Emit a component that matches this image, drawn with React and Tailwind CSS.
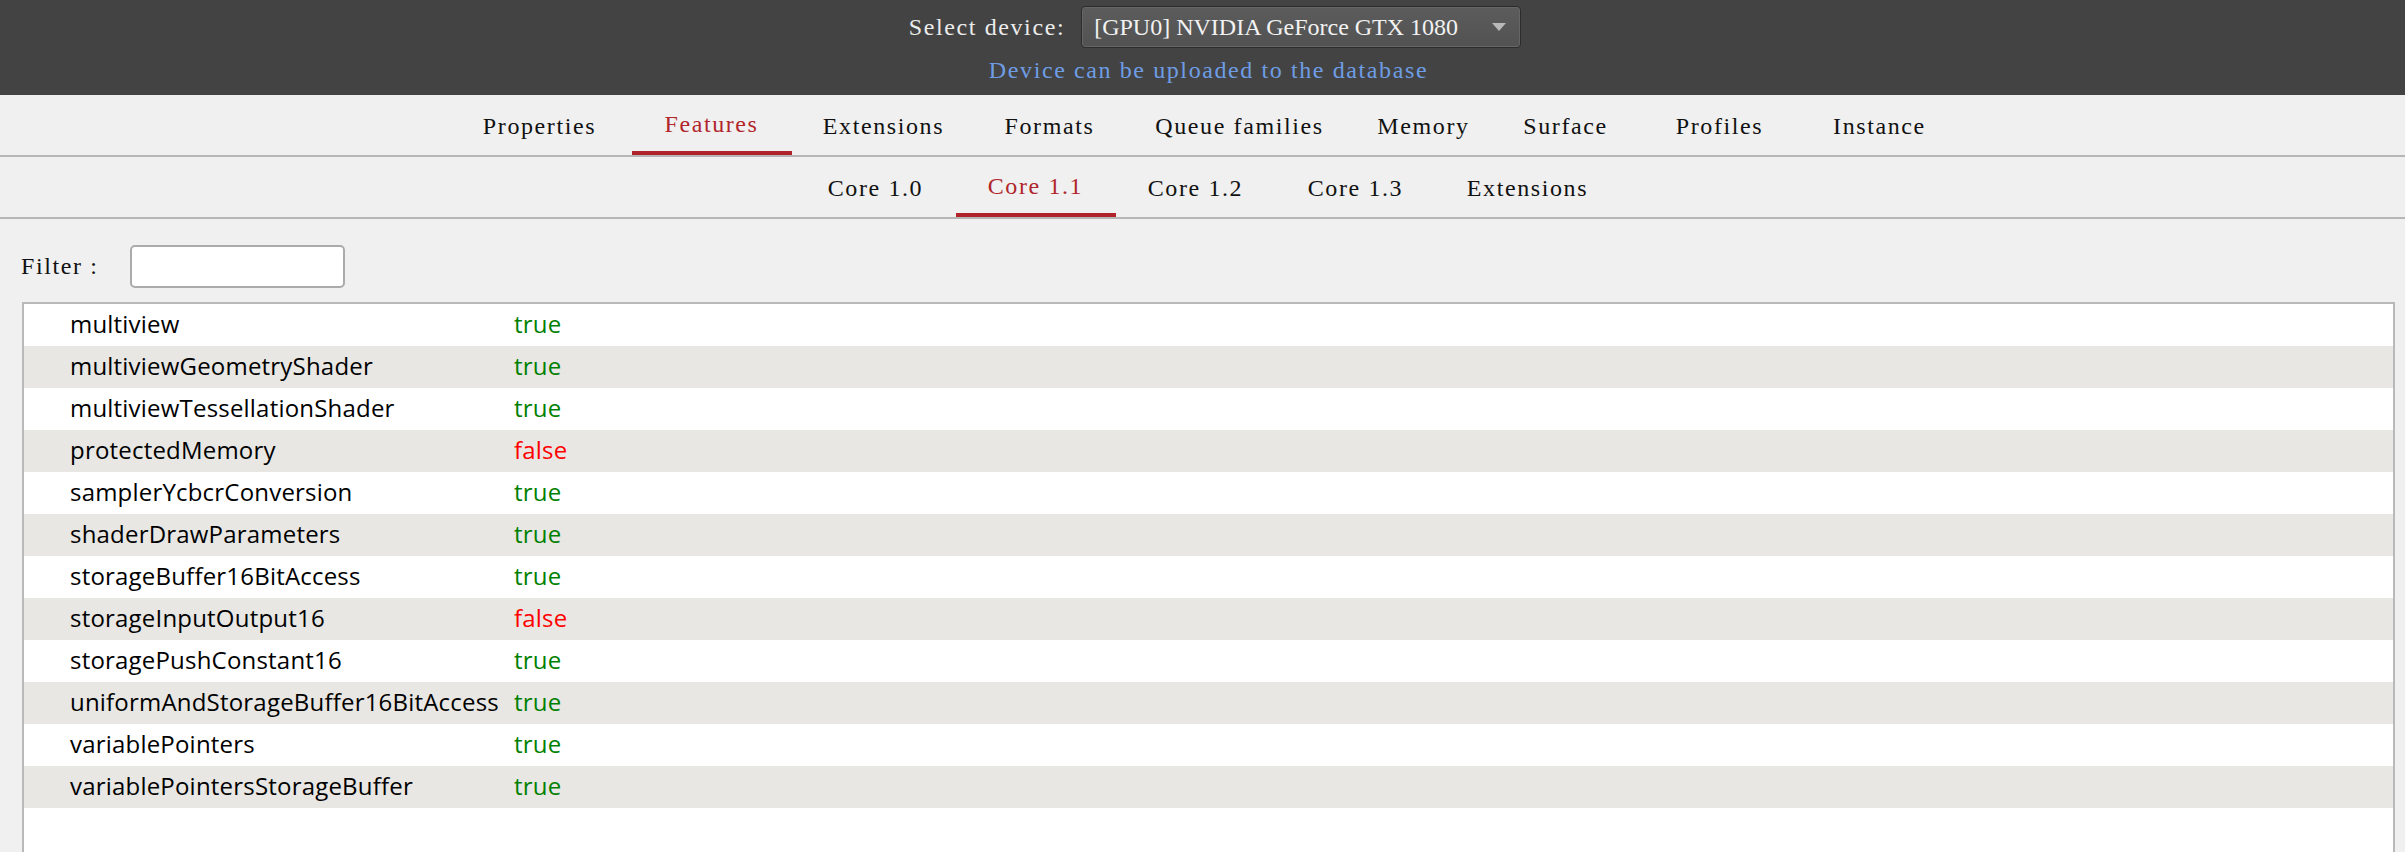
import { useState } from "react"

const serif = "font-['Liberation_Serif',serif]"

const mainTabs = [
  { label: "Properties", w: "w-[184px]" },
  { label: "Features", w: "w-[160px]" },
  { label: "Extensions", w: "w-[184px]" },
  { label: "Formats", w: "w-[148px]" },
  { label: "Queue families", w: "w-[232px]" },
  { label: "Memory", w: "w-[136px]" },
  { label: "Surface", w: "w-[148px]" },
  { label: "Profiles", w: "w-[160px]" },
  { label: "Instance", w: "w-[160px]" },
]

const subTabs = [
  { label: "Core 1.0", w: "w-[160px]" },
  { label: "Core 1.1", w: "w-[160px]" },
  { label: "Core 1.2", w: "w-[160px]" },
  { label: "Core 1.3", w: "w-[160px]" },
  { label: "Extensions", w: "w-[184px]" },
]

const features = [
  ["multiview", true],
  ["multiviewGeometryShader", true],
  ["multiviewTessellationShader", true],
  ["protectedMemory", false],
  ["samplerYcbcrConversion", true],
  ["shaderDrawParameters", true],
  ["storageBuffer16BitAccess", true],
  ["storageInputOutput16", false],
  ["storagePushConstant16", true],
  ["uniformAndStorageBuffer16BitAccess", true],
  ["variablePointers", true],
  ["variablePointersStorageBuffer", true],
]

const TabBar = ({ tabs, active, onSelect, offset }) => (
  <div className={`h-[62px] shrink-0 border-b-2 border-[#b6b6b6] flex justify-center ${offset}`}>
    {tabs.map((t, i) => (
      <button
        key={t.label}
        onClick={() => onSelect(i)}
        className={`${t.w} h-[60px] flex items-center justify-center border-b-4 whitespace-nowrap ${
          i === active ? "border-[#b0232a] text-[#b0262c] pt-[2px]" : "border-transparent text-[#111] pt-[6px]"
        }`}
      >
        {t.label}
      </button>
    ))}
  </div>
)

export default function App() {
  const [tab, setTab] = useState(1)
  const [sub, setSub] = useState(1)
  const [filter, setFilter] = useState("")

  const rows = features.filter(([name]) => name.toLowerCase().includes(filter.toLowerCase()))

  return (
    <div className={`w-[2405px] h-[852px] overflow-hidden bg-[#f0f0f0] flex flex-col ${serif} text-[24px] tracking-[1.6px]`}>
      {/* device header */}
      <div className="h-[95px] shrink-0 bg-[#434343] flex flex-col items-center">
        <div className="flex items-center gap-[16px] pt-[6px] pl-[25px]">
          <span className="text-[#ececec] whitespace-nowrap">Select device:</span>
          <div className="w-[440px] h-[42px] rounded-[4px] border border-[#2c2c2c] bg-gradient-to-b from-[#5c5c5c] to-[#525252] shadow-[inset_0_0_0_1px_#666] flex items-center justify-between pl-[12px] pr-[14px]">
            <span className="text-[#f2f2f2] whitespace-nowrap tracking-normal">[GPU0] NVIDIA GeForce GTX 1080</span>
            <svg width="14" height="8" viewBox="0 0 14 8">
              <polygon points="0,0 14,0 7,8" fill="#b9b9b9" />
            </svg>
          </div>
        </div>
        <div className="pl-[12px] mt-[4px] text-[#6e9de4] whitespace-nowrap">Device can be uploaded to the database</div>
      </div>

      <TabBar tabs={mainTabs} active={tab} onSelect={setTab} offset="pl-[2px]" />
      <TabBar tabs={subTabs} active={sub} onSelect={setSub} offset="pl-[10px]" />

      {/* filter */}
      <div className="h-[69px] shrink-0 flex items-center pt-[25px] pl-[21px] text-[#111]">
        <span className="w-[109px]">Filter :</span>
        <input
          value={filter}
          onChange={(e) => setFilter(e.target.value)}
          className="w-[215px] h-[43px] rounded-[5px] border-2 border-[#ababab] bg-white outline-none px-2"
        />
      </div>

      {/* feature table */}
      <div className="mt-[14px] ml-[22px] mr-[10px] flex-1 bg-white border-2 border-b-0 border-[#b9b9b9] font-['Open_Sans',sans-serif] text-[24px] tracking-[0.2px]">
        {rows.map(([name, value], i) => (
          <div key={name} className={`h-[42px] flex items-center pb-[3px] ${i % 2 ? "bg-[#e8e7e3]" : "bg-white"}`}>
            <div className="w-[490px] pl-[46px] text-black whitespace-nowrap">{name}</div>
            <div className={value ? "text-[#008000]" : "text-[#ff0000]"}>{value ? "true" : "false"}</div>
          </div>
        ))}
      </div>
    </div>
  )
}
